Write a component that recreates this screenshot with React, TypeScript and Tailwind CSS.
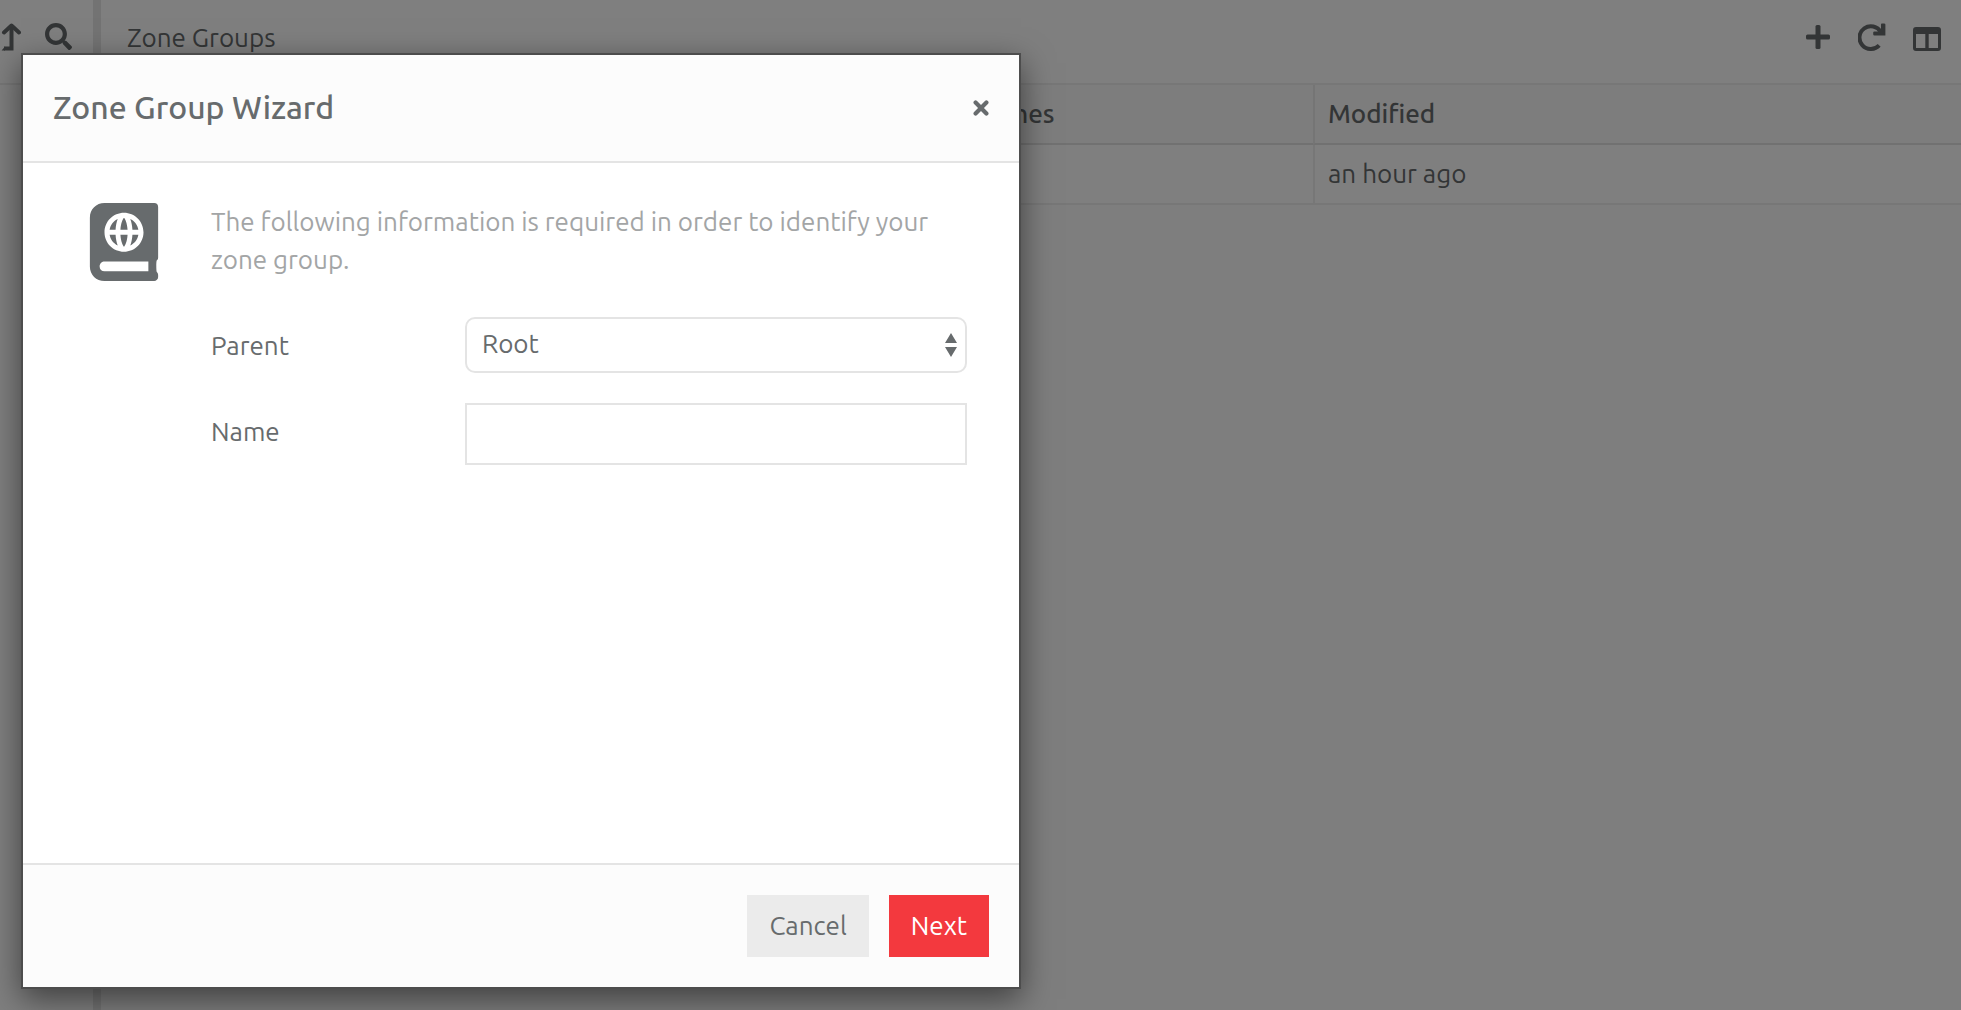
import React from 'react';
import { FaAtlas, FaSearch } from 'react-icons/fa';

function LevelUpIcon() {
  return (
    <svg width="20" height="28" viewBox="0 0 20 28" fill="none" stroke="currentColor" strokeLinejoin="round">
      <path d="M3 9.5 L10.5 2.5 L18 9.5" strokeWidth="4" strokeLinecap="round" />
      <path d="M10.5 3 V25.5 H3" strokeWidth="4" strokeLinejoin="miter" />
      <path d="M0.6 27.5 L4 23.5 V27.5 Z" fill="currentColor" stroke="none" />
    </svg>
  );
}

function PlusIcon() {
  return (
    <svg width="24" height="24" viewBox="0 0 24 24" fill="currentColor">
      <rect x="9.5" y="0" width="5" height="24" rx="1.5" />
      <rect x="0" y="9.5" width="24" height="5" rx="1.5" />
    </svg>
  );
}

function RefreshIcon() {
  return (
    <svg width="28" height="28" viewBox="0 0 28 28" fill="none" stroke="currentColor">
      <path d="M22.8 9 A11.4 11.4 0 1 0 21.2 22.4" strokeWidth="4" />
      <path d="M23.8 0.4 H26 Q27.4 0.4 27.4 1.6 V12.4 H16.4 Q15.2 12.4 15.2 11.2 V9.4 Q15.2 8.6 16.4 8.6 H23 V1.6 Q23 0.4 23.8 0.4 Z" fill="currentColor" stroke="none" />
    </svg>
  );
}

function ColumnsIcon() {
  return (
    <svg width="28" height="24" viewBox="0 0 28 24" fill="currentColor">
      <path fillRule="evenodd" d="M3 0 H25 Q28 0 28 3 V21 Q28 24 25 24 H3 Q0 24 0 21 V3 Q0 0 3 0 Z M3 7 V21 H12.3 V7 Z M15.7 7 V21 H25 V7 Z" />
    </svg>
  );
}

function CloseIcon() {
  return (
    <svg width="16" height="16" viewBox="0 0 16 16" fill="none" stroke="currentColor" strokeWidth="4.2" strokeLinecap="round">
      <path d="M2.6 2.6 L13.4 13.4 M13.4 2.6 L2.6 13.4" />
    </svg>
  );
}

function SortArrows() {
  return (
    <svg width="12" height="24" viewBox="0 0 12 24" fill="currentColor" className="pointer-events-none absolute top-4 right-[10px]">
      <path d="M6 0 L12 10 H0 Z M0 14 H12 L6 24 Z" />
    </svg>
  );
}

function Sidebar() {
  return (
    <aside className="w-[101px] shrink-0 border-r-8 border-[#e6e6e6]">
      <div className="flex h-[85px] items-center justify-end gap-6 border-b-2 border-[#eeeeee] pr-[21px] pb-2.5">
        <button type="button" aria-label="Level up"><LevelUpIcon /></button>
        <button type="button" aria-label="Search"><FaSearch size={27} /></button>
      </div>
    </aside>
  );
}

function ZoneGroups() {
  return (
    <main className="flex-1 bg-[#fcfcfc]">
      <header className="flex h-[85px] items-center justify-between border-b-2 border-[#eeeeee] bg-white pr-5 pb-2 pl-[26px]">
        <h1>Zone Groups</h1>
        <div className="flex items-center pb-0.5">
          <button type="button" aria-label="Add" className="mr-7"><PlusIcon /></button>
          <button type="button" aria-label="Refresh" className="mr-[27px]"><RefreshIcon /></button>
          <button type="button" aria-label="Columns" className="pt-1"><ColumnsIcon /></button>
        </div>
      </header>
      <table className="w-full table-fixed border-separate border-spacing-0 text-left leading-[58px]">
        <colgroup>
          <col className="w-[869px]" />
          <col className="w-[343px]" />
          <col />
        </colgroup>
        <thead>
          <tr className="bg-[#fafafa]">
            <td className="border-b-2 border-[#e2e2e2] px-[13px]" />
            <th className="border-b-2 border-[#e2e2e2] px-[13px] font-medium">Zones</th>
            <th className="border-b-2 border-l-2 border-b-[#e2e2e2] border-l-[#eaeaea] px-[13px] font-medium">Modified</th>
          </tr>
        </thead>
        <tbody>
          <tr className="bg-white">
            <td className="border-b-2 border-[#eeeeee] px-[13px]" />
            <td className="border-b-2 border-[#eeeeee] px-[13px]" />
            <td className="border-b-2 border-l-2 border-[#eeeeee] px-[13px]">an hour ago</td>
          </tr>
        </tbody>
      </table>
    </main>
  );
}

function WizardDialog() {
  return (
    <form
      role="dialog"
      aria-modal="true"
      aria-labelledby="wizard-title"
      className="flex w-full max-w-[1000px] flex-col border-2 border-[#4d4d4d] bg-white shadow-[0_10px_30px_rgba(0,0,0,0.5)]"
    >
      <header className="flex h-[108px] shrink-0 items-center justify-between border-b-2 border-[#e4e4e4] bg-[#fcfcfc] px-[30px] pb-0.5">
        <h2 id="wizard-title" className="text-[32px] font-medium">Zone Group Wizard</h2>
        <button type="button" aria-label="Close" className="pt-0.5"><CloseIcon /></button>
      </header>

      <section className="flex flex-1 pt-10 pr-[52px] pl-[66px]">
        <div className="w-[122px] shrink-0">
          <FaAtlas size={78} className="-ml-1" />
        </div>
        <div className="flex-1">
          <p className="mb-[38px] leading-[38px] text-[#a3a5a6]">
            The following information is required in order to identify your zone group.
          </p>
          <div className="mb-7 flex leading-[58px]">
            <label htmlFor="parent" className="w-[254px]">Parent</label>
            <div className="relative h-14 flex-1">
              <select id="parent" className="block h-14 w-full appearance-none rounded-[10px] border-2 border-[#e4e4e4] bg-white pr-10 pb-0.5 pl-[15px] leading-[48px]">
                <option>Root</option>
              </select>
              <SortArrows />
            </div>
          </div>
          <div className="flex leading-[58px]">
            <label htmlFor="name" className="w-[254px]">Name</label>
            <input id="name" type="text" className="h-[62px] min-w-0 flex-1 border-2 border-[#e4e4e4] bg-white px-4" />
          </div>
        </div>
      </section>

      <footer className="flex shrink-0 justify-end gap-5 border-t-2 border-[#e4e4e4] bg-[#fcfcfc] p-[30px]">
        <button type="button" className="h-[62px] bg-[#ebebeb] px-[22px]">Cancel</button>
        <button type="submit" className="h-[62px] bg-[#f3393e] px-[22px] text-white">Next</button>
      </footer>
    </form>
  );
}

export default function App() {
  return (
    <div className="relative min-h-screen font-['Ubuntu','Noto_Sans',sans-serif] text-[26px] leading-8 text-[#676b6d]">
      <div className="flex min-h-screen">
        <Sidebar />
        <ZoneGroups />
      </div>
      <div className="absolute inset-0 flex bg-black/50 pt-[53px] pr-5 pb-[21px] pl-[21px]">
        <WizardDialog />
      </div>
    </div>
  );
}
